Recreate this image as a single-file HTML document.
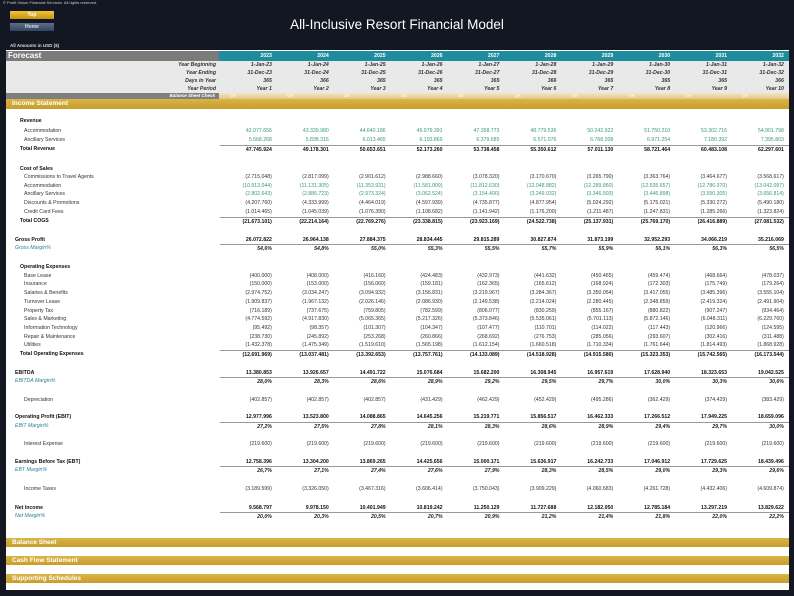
<!DOCTYPE html>
<html><head><meta charset="utf-8"><style>
*{margin:0;padding:0;box-sizing:border-box}
body{width:794px;height:596px;background:#121722;font-family:"Liberation Sans",sans-serif;position:relative;overflow:hidden}
.abs{position:absolute}
.panel{position:absolute;left:6px;top:50px;width:783px;height:540px;background:#fff}
.r{position:absolute;left:6px;width:783px;height:8px;line-height:8px;font-size:5.2px;color:#333;display:flex}
.r .l{width:214px;white-space:nowrap;overflow:hidden}
.r .c{width:56.9px;text-align:right;padding-right:5px;white-space:nowrap}
.b{font-weight:bold;color:#111}
.g .c{color:#3a9a72}
.m{color:#2a7f9a;font-style:italic}
.m .c{color:#222;font-weight:bold;font-style:italic}
.t .c{border-top:0.6px solid #999}
.bar{position:absolute;left:6px;width:783px;height:9px;background:linear-gradient(#d9b447,#c99d2a);color:#fff;font-weight:bold;font-size:6.5px;line-height:9px;padding-left:6px}
.hdr .c{font-style:italic;font-weight:bold;color:#333}
</style></head><body>
<div class="abs" style="left:3px;top:0;font-size:4px;color:#ccc">© Profit Vision Financial Services. All rights reserved.</div>
<div class="abs" style="left:10px;top:11px;width:44px;height:8px;background:linear-gradient(#f0c533,#c49516);font-size:5px;color:#fff;text-align:center;line-height:8px;font-weight:bold">Top</div>
<div class="abs" style="left:10px;top:23px;width:44px;height:8px;background:linear-gradient(#5c6f8c,#34445e);font-size:5px;color:#ddd;text-align:center;line-height:8px;font-weight:bold">Home</div>
<div class="abs" style="left:0;width:794px;top:17px;text-align:center;font-size:13.5px;color:#fff">All-Inclusive Resort Financial Model</div>
<div class="abs" style="left:10px;top:43px;font-size:4.5px;color:#ddd;font-weight:bold">All Amounts in USD ($)</div>
<div class="panel"></div>
<div class="abs" style="left:6px;top:51px;width:213px;height:10px;background:#7b7b7b;color:#fff;font-weight:bold;font-size:8px;line-height:10px;padding-left:2px">Forecast</div>
<div class="r b" style="top:51px;height:10px;line-height:10px;background:transparent"><div class="l"></div></div>
<div class="abs" style="left:219px;top:51px;width:570px;height:10px;background:#1e8c9c"></div>
<div class="r" style="top:52px;color:#fff;font-weight:bold"><div class="l"></div><div class="c">2023</div><div class="c">2024</div><div class="c">2025</div><div class="c">2026</div><div class="c">2027</div><div class="c">2028</div><div class="c">2029</div><div class="c">2030</div><div class="c">2031</div><div class="c">2032</div></div>
<div class="abs" style="left:6px;top:61px;width:783px;height:32px;background:#e9e9ea"></div>
<div class="r hdr" style="top:61px"><div class="l" style="text-align:right;padding-right:4px;font-style:italic;font-weight:bold">Year Beginning</div><div class="c">1-Jan-23</div><div class="c">1-Jan-24</div><div class="c">1-Jan-25</div><div class="c">1-Jan-26</div><div class="c">1-Jan-27</div><div class="c">1-Jan-28</div><div class="c">1-Jan-29</div><div class="c">1-Jan-30</div><div class="c">1-Jan-31</div><div class="c">1-Jan-32</div></div>
<div class="r hdr" style="top:69px"><div class="l" style="text-align:right;padding-right:4px;font-style:italic;font-weight:bold">Year Ending</div><div class="c">31-Dec-23</div><div class="c">31-Dec-24</div><div class="c">31-Dec-25</div><div class="c">31-Dec-26</div><div class="c">31-Dec-27</div><div class="c">31-Dec-28</div><div class="c">31-Dec-29</div><div class="c">31-Dec-30</div><div class="c">31-Dec-31</div><div class="c">31-Dec-32</div></div>
<div class="r hdr" style="top:77px"><div class="l" style="text-align:right;padding-right:4px;font-style:italic;font-weight:bold">Days in Year</div><div class="c">365</div><div class="c">366</div><div class="c">365</div><div class="c">365</div><div class="c">365</div><div class="c">366</div><div class="c">365</div><div class="c">365</div><div class="c">365</div><div class="c">366</div></div>
<div class="r hdr" style="top:85px"><div class="l" style="text-align:right;padding-right:4px;font-style:italic;font-weight:bold">Year Period</div><div class="c">Year 1</div><div class="c">Year 2</div><div class="c">Year 3</div><div class="c">Year 4</div><div class="c">Year 5</div><div class="c">Year 6</div><div class="c">Year 7</div><div class="c">Year 8</div><div class="c">Year 9</div><div class="c">Year 10</div></div>
<div class="abs" style="left:6px;top:93px;width:213px;height:6px;background:#7f7f7f;color:#fff;font-size:4.5px;line-height:6px;text-align:right;padding-right:4px;font-weight:bold;font-style:italic">Balance Sheet Check</div>
<div class="abs" style="left:219px;top:93px;width:570px;height:6px;background:linear-gradient(#f3e6c3,#e2c888)"></div>
<div class="r" style="top:92px;color:#fff;font-size:4.5px"><div class="l"></div><div class="c" style="text-align:left;padding-left:10px">OK</div><div class="c" style="text-align:left;padding-left:10px">OK</div><div class="c" style="text-align:left;padding-left:10px">OK</div><div class="c" style="text-align:left;padding-left:10px">OK</div><div class="c" style="text-align:left;padding-left:10px">OK</div><div class="c" style="text-align:left;padding-left:10px">OK</div><div class="c" style="text-align:left;padding-left:10px">OK</div><div class="c" style="text-align:left;padding-left:10px">OK</div><div class="c" style="text-align:left;padding-left:10px">OK</div><div class="c" style="text-align:left;padding-left:10px">OK</div></div>
<div class="bar" style="top:99px;height:10px;line-height:10px">Income Statement</div>

<div class="r b" style="top:117px"><div class="l" style="padding-left:14px">Revenue</div></div>
<div class="r g" style="top:127px"><div class="l" style="padding-left:18px">Accommodation</div><div class="c">42.077.656</div><div class="c">43.339.980</div><div class="c">44.640.186</div><div class="c">45.979.391</div><div class="c">47.358.773</div><div class="c">48.779.536</div><div class="c">50.242.922</div><div class="c">51.750.210</div><div class="c">53.302.716</div><div class="c">54.901.798</div></div>
<div class="r g" style="top:136px"><div class="l" style="padding-left:18px">Ancillary Services</div><div class="c">5.668.268</div><div class="c">5.838.316</div><div class="c">6.013.465</div><div class="c">6.193.869</div><div class="c">6.379.685</div><div class="c">6.571.076</div><div class="c">6.768.208</div><div class="c">6.971.254</div><div class="c">7.180.392</div><div class="c">7.395.803</div></div>
<div class="r b t" style="top:145px"><div class="l" style="padding-left:14px">Total Revenue</div><div class="c">47.745.924</div><div class="c">49.178.301</div><div class="c">50.653.651</div><div class="c">52.173.260</div><div class="c">53.738.458</div><div class="c">55.350.612</div><div class="c">57.011.130</div><div class="c">58.721.464</div><div class="c">60.483.108</div><div class="c">62.297.601</div></div>

<div class="r b" style="top:165px"><div class="l" style="padding-left:14px">Cost of Sales</div></div>
<div class="r" style="top:173px"><div class="l" style="padding-left:18px">Commissions to Travel Agents</div><div class="c">(2.715.048)</div><div class="c">(2.817.099)</div><div class="c">(2.901.612)</div><div class="c">(2.988.660)</div><div class="c">(3.078.320)</div><div class="c">(3.170.670)</div><div class="c">(3.265.790)</div><div class="c">(3.363.764)</div><div class="c">(3.464.677)</div><div class="c">(3.568.617)</div></div>
<div class="r g" style="top:182px"><div class="l" style="padding-left:18px">Accommodation</div><div class="c">(10.913.044)</div><div class="c">(11.131.305)</div><div class="c">(11.353.931)</div><div class="c">(11.581.009)</div><div class="c">(11.812.630)</div><div class="c">(12.048.882)</div><div class="c">(12.289.860)</div><div class="c">(12.535.657)</div><div class="c">(12.786.370)</div><div class="c">(13.042.097)</div></div>
<div class="r g" style="top:190px"><div class="l" style="padding-left:18px">Ancillary Services</div><div class="c">(2.802.643)</div><div class="c">(2.886.723)</div><div class="c">(2.973.324)</div><div class="c">(3.062.524)</div><div class="c">(3.154.400)</div><div class="c">(3.249.032)</div><div class="c">(3.346.503)</div><div class="c">(3.446.898)</div><div class="c">(3.550.305)</div><div class="c">(3.656.814)</div></div>
<div class="r" style="top:199px"><div class="l" style="padding-left:18px">Discounts &amp; Promotions</div><div class="c">(4.207.760)</div><div class="c">(4.333.999)</div><div class="c">(4.464.019)</div><div class="c">(4.597.939)</div><div class="c">(4.735.877)</div><div class="c">(4.877.954)</div><div class="c">(5.024.292)</div><div class="c">(5.175.021)</div><div class="c">(5.330.272)</div><div class="c">(5.490.180)</div></div>
<div class="r" style="top:208px"><div class="l" style="padding-left:18px">Credit Card Fees</div><div class="c">(1.014.465)</div><div class="c">(1.045.039)</div><div class="c">(1.076.390)</div><div class="c">(1.108.682)</div><div class="c">(1.141.942)</div><div class="c">(1.176.200)</div><div class="c">(1.211.487)</div><div class="c">(1.247.831)</div><div class="c">(1.285.266)</div><div class="c">(1.323.824)</div></div>
<div class="r b t" style="top:217px"><div class="l" style="padding-left:14px">Total COGS</div><div class="c">(21.673.101)</div><div class="c">(22.214.164)</div><div class="c">(22.769.276)</div><div class="c">(23.338.815)</div><div class="c">(23.923.169)</div><div class="c">(24.522.738)</div><div class="c">(25.137.931)</div><div class="c">(25.769.170)</div><div class="c">(26.416.889)</div><div class="c">(27.081.532)</div></div>

<div class="r b" style="top:236px"><div class="l" style="padding-left:9px">Gross Profit</div><div class="c">26.072.822</div><div class="c">26.964.138</div><div class="c">27.884.375</div><div class="c">28.834.445</div><div class="c">29.815.289</div><div class="c">30.827.874</div><div class="c">31.873.199</div><div class="c">32.952.293</div><div class="c">34.066.219</div><div class="c">35.216.069</div></div>
<div class="r m t" style="top:244px"><div class="l" style="padding-left:9px">Gross Margin%</div><div class="c">54,6%</div><div class="c">54,8%</div><div class="c">55,0%</div><div class="c">55,3%</div><div class="c">55,5%</div><div class="c">55,7%</div><div class="c">55,9%</div><div class="c">56,1%</div><div class="c">56,3%</div><div class="c">56,5%</div></div>

<div class="r b" style="top:263px"><div class="l" style="padding-left:14px">Operating Expenses</div></div>
<div class="r" style="top:272px"><div class="l" style="padding-left:18px">Base Lease</div><div class="c">(400.000)</div><div class="c">(408.000)</div><div class="c">(416.160)</div><div class="c">(424.483)</div><div class="c">(432.973)</div><div class="c">(441.632)</div><div class="c">(450.465)</div><div class="c">(459.474)</div><div class="c">(468.664)</div><div class="c">(478.037)</div></div>
<div class="r" style="top:280px"><div class="l" style="padding-left:18px">Insurance</div><div class="c">(150.000)</div><div class="c">(153.000)</div><div class="c">(156.060)</div><div class="c">(159.181)</div><div class="c">(162.365)</div><div class="c">(165.612)</div><div class="c">(168.924)</div><div class="c">(172.303)</div><div class="c">(175.749)</div><div class="c">(179.264)</div></div>
<div class="r" style="top:289px"><div class="l" style="padding-left:18px">Salaries &amp; Benefits</div><div class="c">(2.974.752)</div><div class="c">(3.034.247)</div><div class="c">(3.094.932)</div><div class="c">(3.156.831)</div><div class="c">(3.219.967)</div><div class="c">(3.284.367)</div><div class="c">(3.350.054)</div><div class="c">(3.417.055)</div><div class="c">(3.485.396)</div><div class="c">(3.555.104)</div></div>
<div class="r" style="top:298px"><div class="l" style="padding-left:18px">Turnover Lease</div><div class="c">(1.909.837)</div><div class="c">(1.967.132)</div><div class="c">(2.026.146)</div><div class="c">(2.086.930)</div><div class="c">(2.149.538)</div><div class="c">(2.214.024)</div><div class="c">(2.280.445)</div><div class="c">(2.348.859)</div><div class="c">(2.419.324)</div><div class="c">(2.491.904)</div></div>
<div class="r" style="top:307px"><div class="l" style="padding-left:18px">Property Tax</div><div class="c">(716.189)</div><div class="c">(737.675)</div><div class="c">(759.805)</div><div class="c">(782.599)</div><div class="c">(806.077)</div><div class="c">(830.259)</div><div class="c">(855.167)</div><div class="c">(880.822)</div><div class="c">(907.247)</div><div class="c">(934.464)</div></div>
<div class="r" style="top:315px"><div class="l" style="padding-left:18px">Sales &amp; Marketing</div><div class="c">(4.774.592)</div><div class="c">(4.917.830)</div><div class="c">(5.065.365)</div><div class="c">(5.217.326)</div><div class="c">(5.373.846)</div><div class="c">(5.535.061)</div><div class="c">(5.701.113)</div><div class="c">(5.872.146)</div><div class="c">(6.048.311)</div><div class="c">(6.229.760)</div></div>
<div class="r" style="top:324px"><div class="l" style="padding-left:18px">Information Technology</div><div class="c">(95.492)</div><div class="c">(98.357)</div><div class="c">(101.307)</div><div class="c">(104.347)</div><div class="c">(107.477)</div><div class="c">(110.701)</div><div class="c">(114.022)</div><div class="c">(117.443)</div><div class="c">(120.966)</div><div class="c">(124.595)</div></div>
<div class="r" style="top:333px"><div class="l" style="padding-left:18px">Repair &amp; Maintenance</div><div class="c">(238.730)</div><div class="c">(245.892)</div><div class="c">(253.268)</div><div class="c">(260.866)</div><div class="c">(268.692)</div><div class="c">(276.753)</div><div class="c">(285.056)</div><div class="c">(293.607)</div><div class="c">(302.416)</div><div class="c">(311.488)</div></div>
<div class="r" style="top:341px"><div class="l" style="padding-left:18px">Utilities</div><div class="c">(1.432.378)</div><div class="c">(1.475.349)</div><div class="c">(1.519.610)</div><div class="c">(1.565.198)</div><div class="c">(1.612.154)</div><div class="c">(1.660.518)</div><div class="c">(1.710.334)</div><div class="c">(1.761.644)</div><div class="c">(1.814.493)</div><div class="c">(1.868.928)</div></div>
<div class="r b t" style="top:350px"><div class="l" style="padding-left:14px">Total Operating Expenses</div><div class="c">(12.691.969)</div><div class="c">(13.037.481)</div><div class="c">(13.392.653)</div><div class="c">(13.757.761)</div><div class="c">(14.133.089)</div><div class="c">(14.518.928)</div><div class="c">(14.915.580)</div><div class="c">(15.323.353)</div><div class="c">(15.742.565)</div><div class="c">(16.173.544)</div></div>

<div class="r b" style="top:369px"><div class="l" style="padding-left:9px">EBITDA</div><div class="c">13.380.853</div><div class="c">13.926.657</div><div class="c">14.491.722</div><div class="c">15.076.684</div><div class="c">15.682.200</div><div class="c">16.308.945</div><div class="c">16.957.619</div><div class="c">17.628.940</div><div class="c">18.323.653</div><div class="c">19.042.525</div></div>
<div class="r m t" style="top:377px"><div class="l" style="padding-left:9px">EBITDA Margin%</div><div class="c">28,0%</div><div class="c">28,3%</div><div class="c">28,6%</div><div class="c">28,9%</div><div class="c">29,2%</div><div class="c">29,5%</div><div class="c">29,7%</div><div class="c">30,0%</div><div class="c">30,3%</div><div class="c">30,6%</div></div>
<div class="r" style="top:396px"><div class="l" style="padding-left:18px">Depreciation</div><div class="c">(402.857)</div><div class="c">(402.857)</div><div class="c">(402.857)</div><div class="c">(431.429)</div><div class="c">(462.429)</div><div class="c">(452.429)</div><div class="c">(495.286)</div><div class="c">(362.429)</div><div class="c">(374.429)</div><div class="c">(383.429)</div></div>
<div class="r b" style="top:413px"><div class="l" style="padding-left:9px">Operating Profit (EBIT)</div><div class="c">12.977.996</div><div class="c">13.523.800</div><div class="c">14.088.865</div><div class="c">14.645.256</div><div class="c">15.219.771</div><div class="c">15.856.517</div><div class="c">16.462.333</div><div class="c">17.266.512</div><div class="c">17.949.225</div><div class="c">18.659.096</div></div>
<div class="r m t" style="top:422px"><div class="l" style="padding-left:9px">EBIT Margin%</div><div class="c">27,2%</div><div class="c">27,5%</div><div class="c">27,8%</div><div class="c">28,1%</div><div class="c">28,3%</div><div class="c">28,6%</div><div class="c">28,9%</div><div class="c">29,4%</div><div class="c">29,7%</div><div class="c">30,0%</div></div>
<div class="r" style="top:440px"><div class="l" style="padding-left:18px">Interest Expense</div><div class="c">(219.600)</div><div class="c">(219.600)</div><div class="c">(219.600)</div><div class="c">(219.600)</div><div class="c">(219.600)</div><div class="c">(219.600)</div><div class="c">(219.600)</div><div class="c">(219.600)</div><div class="c">(219.600)</div><div class="c">(219.600)</div></div>
<div class="r b" style="top:458px"><div class="l" style="padding-left:9px">Earnings Before Tax (EBT)</div><div class="c">12.758.396</div><div class="c">13.304.200</div><div class="c">13.869.265</div><div class="c">14.425.656</div><div class="c">15.000.171</div><div class="c">15.636.917</div><div class="c">16.242.733</div><div class="c">17.046.912</div><div class="c">17.729.625</div><div class="c">18.439.496</div></div>
<div class="r m t" style="top:466px"><div class="l" style="padding-left:9px">EBT Margin%</div><div class="c">26,7%</div><div class="c">27,1%</div><div class="c">27,4%</div><div class="c">27,6%</div><div class="c">27,9%</div><div class="c">28,3%</div><div class="c">28,5%</div><div class="c">29,0%</div><div class="c">29,3%</div><div class="c">29,6%</div></div>
<div class="r" style="top:485px"><div class="l" style="padding-left:18px">Income Taxes</div><div class="c">(3.189.599)</div><div class="c">(3.326.050)</div><div class="c">(3.467.316)</div><div class="c">(3.606.414)</div><div class="c">(3.750.043)</div><div class="c">(3.909.229)</div><div class="c">(4.060.683)</div><div class="c">(4.261.728)</div><div class="c">(4.432.406)</div><div class="c">(4.609.874)</div></div>
<div class="r b" style="top:504px"><div class="l" style="padding-left:9px">Net Income</div><div class="c">9.568.797</div><div class="c">9.978.150</div><div class="c">10.401.949</div><div class="c">10.819.242</div><div class="c">11.250.129</div><div class="c">11.727.688</div><div class="c">12.182.050</div><div class="c">12.785.184</div><div class="c">13.297.219</div><div class="c">13.829.622</div></div>
<div class="r m t" style="top:512px"><div class="l" style="padding-left:9px">Net Margin%</div><div class="c">20,0%</div><div class="c">20,3%</div><div class="c">20,5%</div><div class="c">20,7%</div><div class="c">20,9%</div><div class="c">21,2%</div><div class="c">21,4%</div><div class="c">21,8%</div><div class="c">22,0%</div><div class="c">22,2%</div></div>

<div class="bar" style="top:538px">Balance Sheet</div>
<div class="bar" style="top:556px">Cash Flow Statement</div>
<div class="bar" style="top:574px">Supporting Schedules</div>
</body></html>
